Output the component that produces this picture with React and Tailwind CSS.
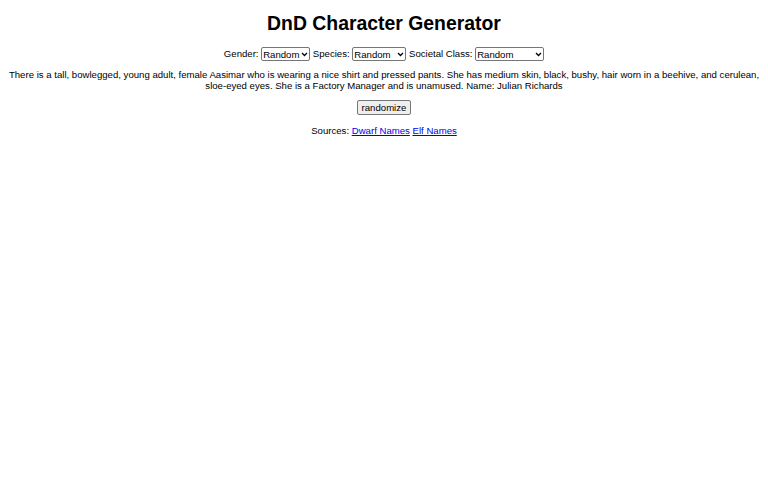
import React from "react";

const font = { fontFamily: '"Liberation Sans", Arial, sans-serif' };

function Picker({ label, width, options }) {
  return (
    <>
      <span>{label}: </span>
      <span className="relative inline-block align-middle">
        <select
          className={`${width} h-[14px] block appearance-none border border-[#767676] rounded-[2px] bg-white text-[9.6px] leading-none text-black pl-[1px] pr-[8px]`}
          style={font}
          defaultValue="Random"
        >
          {options.map((o) => (
            <option key={o}>{o}</option>
          ))}
        </select>
        <svg
          className="absolute right-[2px] top-[5px] pointer-events-none"
          width="7"
          height="5"
          viewBox="0 0 7 5"
        >
          <path d="M1 1 L3.5 3.5 L6 1" fill="none" stroke="#000" strokeWidth="1.3" />
        </svg>
      </span>{" "}
    </>
  );
}

export default function App() {
  return (
    <div className="min-h-[480px] bg-white text-black px-[8px] text-center text-[9.6px]" style={font}>
      <h1 className="pt-[12px] text-[19.4px] font-bold leading-[23px]">DnD Character Generator</h1>
      <div className="mt-[12px] leading-[14px]">
        <Picker label="Gender" width="w-[49px]" options={["Random", "Male", "Female"]} />
        <Picker label="Species" width="w-[54px]" options={["Random", "Human", "Dwarf", "Elf", "Aasimar"]} />
        <Picker label="Societal Class" width="w-[69px]" options={["Random", "Lower", "Middle", "Upper"]} />
      </div>
      <p className="mt-[8px] leading-[11px]">
        There is a tall, bowlegged, young adult, female Aasimar who is wearing a nice shirt and pressed pants. She has medium skin, black, bushy, hair worn in a beehive, and cerulean, sloe-eyed eyes. She is a Factory Manager and is unamused. Name: Julian Richards
      </p>
      <div className="mt-[9px]">
        <button
          className="h-[15px] px-[4px] border border-[#767676] rounded-[2px] bg-[#efefef] text-[9.6px] leading-none"
          style={font}
        >
          randomize
        </button>
      </div>
      <p className="mt-[9px] leading-[11px]">
        Sources: <a href="#" className="text-[#0000ee] underline">Dwarf Names</a>{" "}
        <a href="#" className="text-[#0000ee] underline">Elf Names</a>
      </p>
    </div>
  );
}
